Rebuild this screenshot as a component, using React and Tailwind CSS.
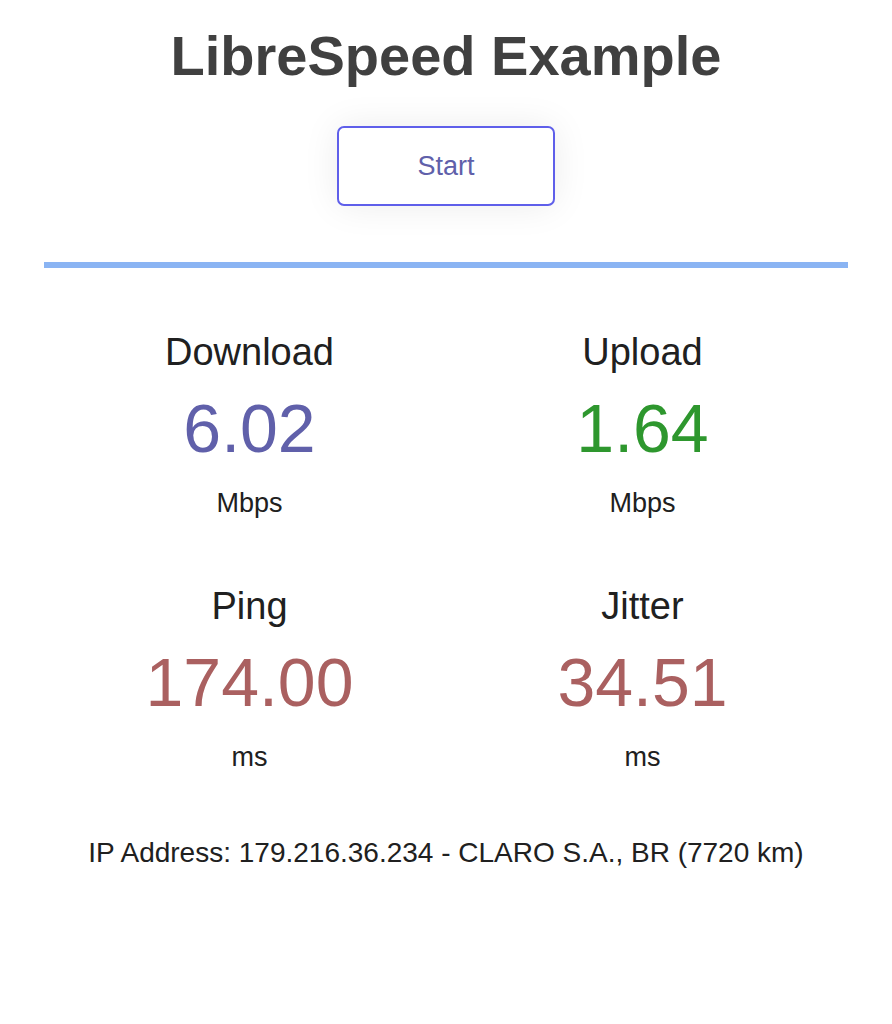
export default function App() {
  const stats = [
    { label: "Download", value: "6.02", unit: "Mbps", color: "text-[#6060aa]" },
    { label: "Upload", value: "1.64", unit: "Mbps", color: "text-[#2e972e]" },
    { label: "Ping", value: "174.00", unit: "ms", color: "text-[#aa6060]" },
    { label: "Jitter", value: "34.51", unit: "ms", color: "text-[#aa6060]" },
  ];

  return (
    <div className="min-h-screen bg-white text-[#202020] font-['Liberation_Sans',Arial,sans-serif]">
      <h1 className="pt-[24px] text-center text-[56px] font-bold leading-[64px] text-[#404040]">
        LibreSpeed Example
      </h1>
      <div className="mt-[38px] flex justify-center">
        <button className="h-[80px] w-[218px] rounded-[7px] border-2 border-[#5f5fea] bg-white text-[27px] text-[#6060aa] shadow-[0_0_36px_rgba(0,0,0,0.08)]">
          Start
        </button>
      </div>
      <div className="mx-[44px] mt-[56px] h-[6px] bg-[#8ab4f3]" />
      <div className="mx-auto mt-[60px] grid w-[786px] grid-cols-2 gap-y-[63px]">
        {stats.map((s) => (
          <div key={s.label} className="flex flex-col items-center">
            <div className="text-[38px] leading-[48px]">{s.label}</div>
            <div className={`mt-[16px] text-[68px] leading-[72px] ${s.color}`}>{s.value}</div>
            <div className="mt-[23px] text-[27px] leading-[32px]">{s.unit}</div>
          </div>
        ))}
      </div>
      <div className="mt-[64px] text-center text-[28px] leading-[32px]">
        IP Address: 179.216.36.234 - CLARO S.A., BR (7720 km)
      </div>
    </div>
  );
}
